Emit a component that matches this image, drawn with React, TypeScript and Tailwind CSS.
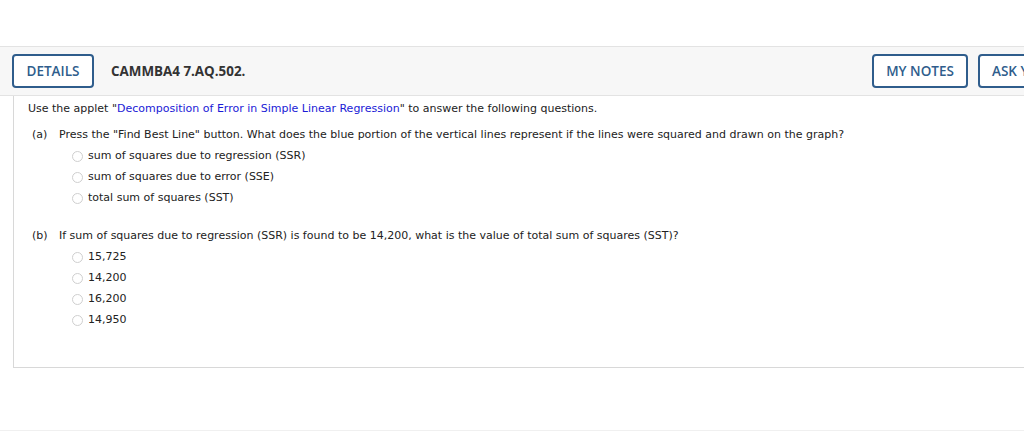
export default function App() {
  const partA = [
    'sum of squares due to regression (SSR)',
    'sum of squares due to error (SSE)',
    'total sum of squares (SST)',
  ]
  const partB = ['15,725', '14,200', '16,200', '14,950']

  const Radio = () => (
    <span className="inline-block w-[11px] h-[11px] rounded-full border border-[#cfcfcf] bg-white shrink-0" />
  )

  return (
    <div className="w-[1024px] h-[432px] bg-white overflow-hidden relative">
      <div className="h-[46px]" />
      <div className="border-t border-[#e3e3e3]">
        <div className="h-[49px] bg-[#f7f7f7] border-b border-[#e3e3e3] flex items-center pl-[12px] font-['Open_Sans',sans-serif] whitespace-nowrap">
          <button className="h-[34px] w-[82px] border-2 border-[#2f5d8c] rounded-[4px] bg-white text-[#2f5d8c] text-[13.5px] font-semibold">
            DETAILS
          </button>
          <span className="ml-[17px] text-[13.4px] font-bold text-[#333]">CAMMBA4 7.AQ.502.</span>
          <div className="ml-auto flex gap-[10px] mr-[-60px]">
            <button className="h-[34px] w-[96px] border-2 border-[#2f5d8c] rounded-[4px] bg-white text-[#2f5d8c] text-[13.5px] font-semibold">
              MY NOTES
            </button>
            <button className="h-[34px] w-[106px] border-2 border-[#2f5d8c] rounded-[4px] bg-white text-[#2f5d8c] text-[13.5px] font-semibold text-left pl-[12px]">
              ASK YOUR
            </button>
          </div>
        </div>
        <div className="ml-[13px] border-l border-b border-[#d8d8d8] h-[272px] pl-[14px] pt-[6px] font-['DejaVu_Sans',Verdana,sans-serif] text-[11px] text-[#222]">
          <p className="leading-[14px]">
            Use the applet "<span className="text-[#1a1ad6]">Decomposition of Error in Simple Linear Regression</span>" to answer the following questions.
          </p>
          <div className="mt-[12px] flex">
            <span className="w-[31px] pl-[4px] leading-[14px]">(a)</span>
            <div>
              <p className="leading-[14px]">
                Press the "Find Best Line" button. What does the blue portion of the vertical lines represent if the lines were squared and drawn on the graph?
              </p>
              <div className="mt-[4px] ml-[13px] flex flex-col">
                {partA.map((t) => (
                  <label key={t} className="flex items-center gap-[5px] h-[21px]">
                    <Radio />
                    <span>{t}</span>
                  </label>
                ))}
              </div>
            </div>
          </div>
          <div className="mt-[20px] flex">
            <span className="w-[31px] pl-[4px] leading-[14px]">(b)</span>
            <div>
              <p className="leading-[14px]">
                If sum of squares due to regression (SSR) is found to be 14,200, what is the value of total sum of squares (SST)?
              </p>
              <div className="mt-[4px] ml-[13px] flex flex-col">
                {partB.map((t) => (
                  <label key={t} className="flex items-center gap-[5px] h-[21px]">
                    <Radio />
                    <span>{t}</span>
                  </label>
                ))}
              </div>
            </div>
          </div>
        </div>
      </div>
      <div className="absolute left-0 right-0 top-[430px] border-t border-[#f0f0f0]" />
    </div>
  )
}
